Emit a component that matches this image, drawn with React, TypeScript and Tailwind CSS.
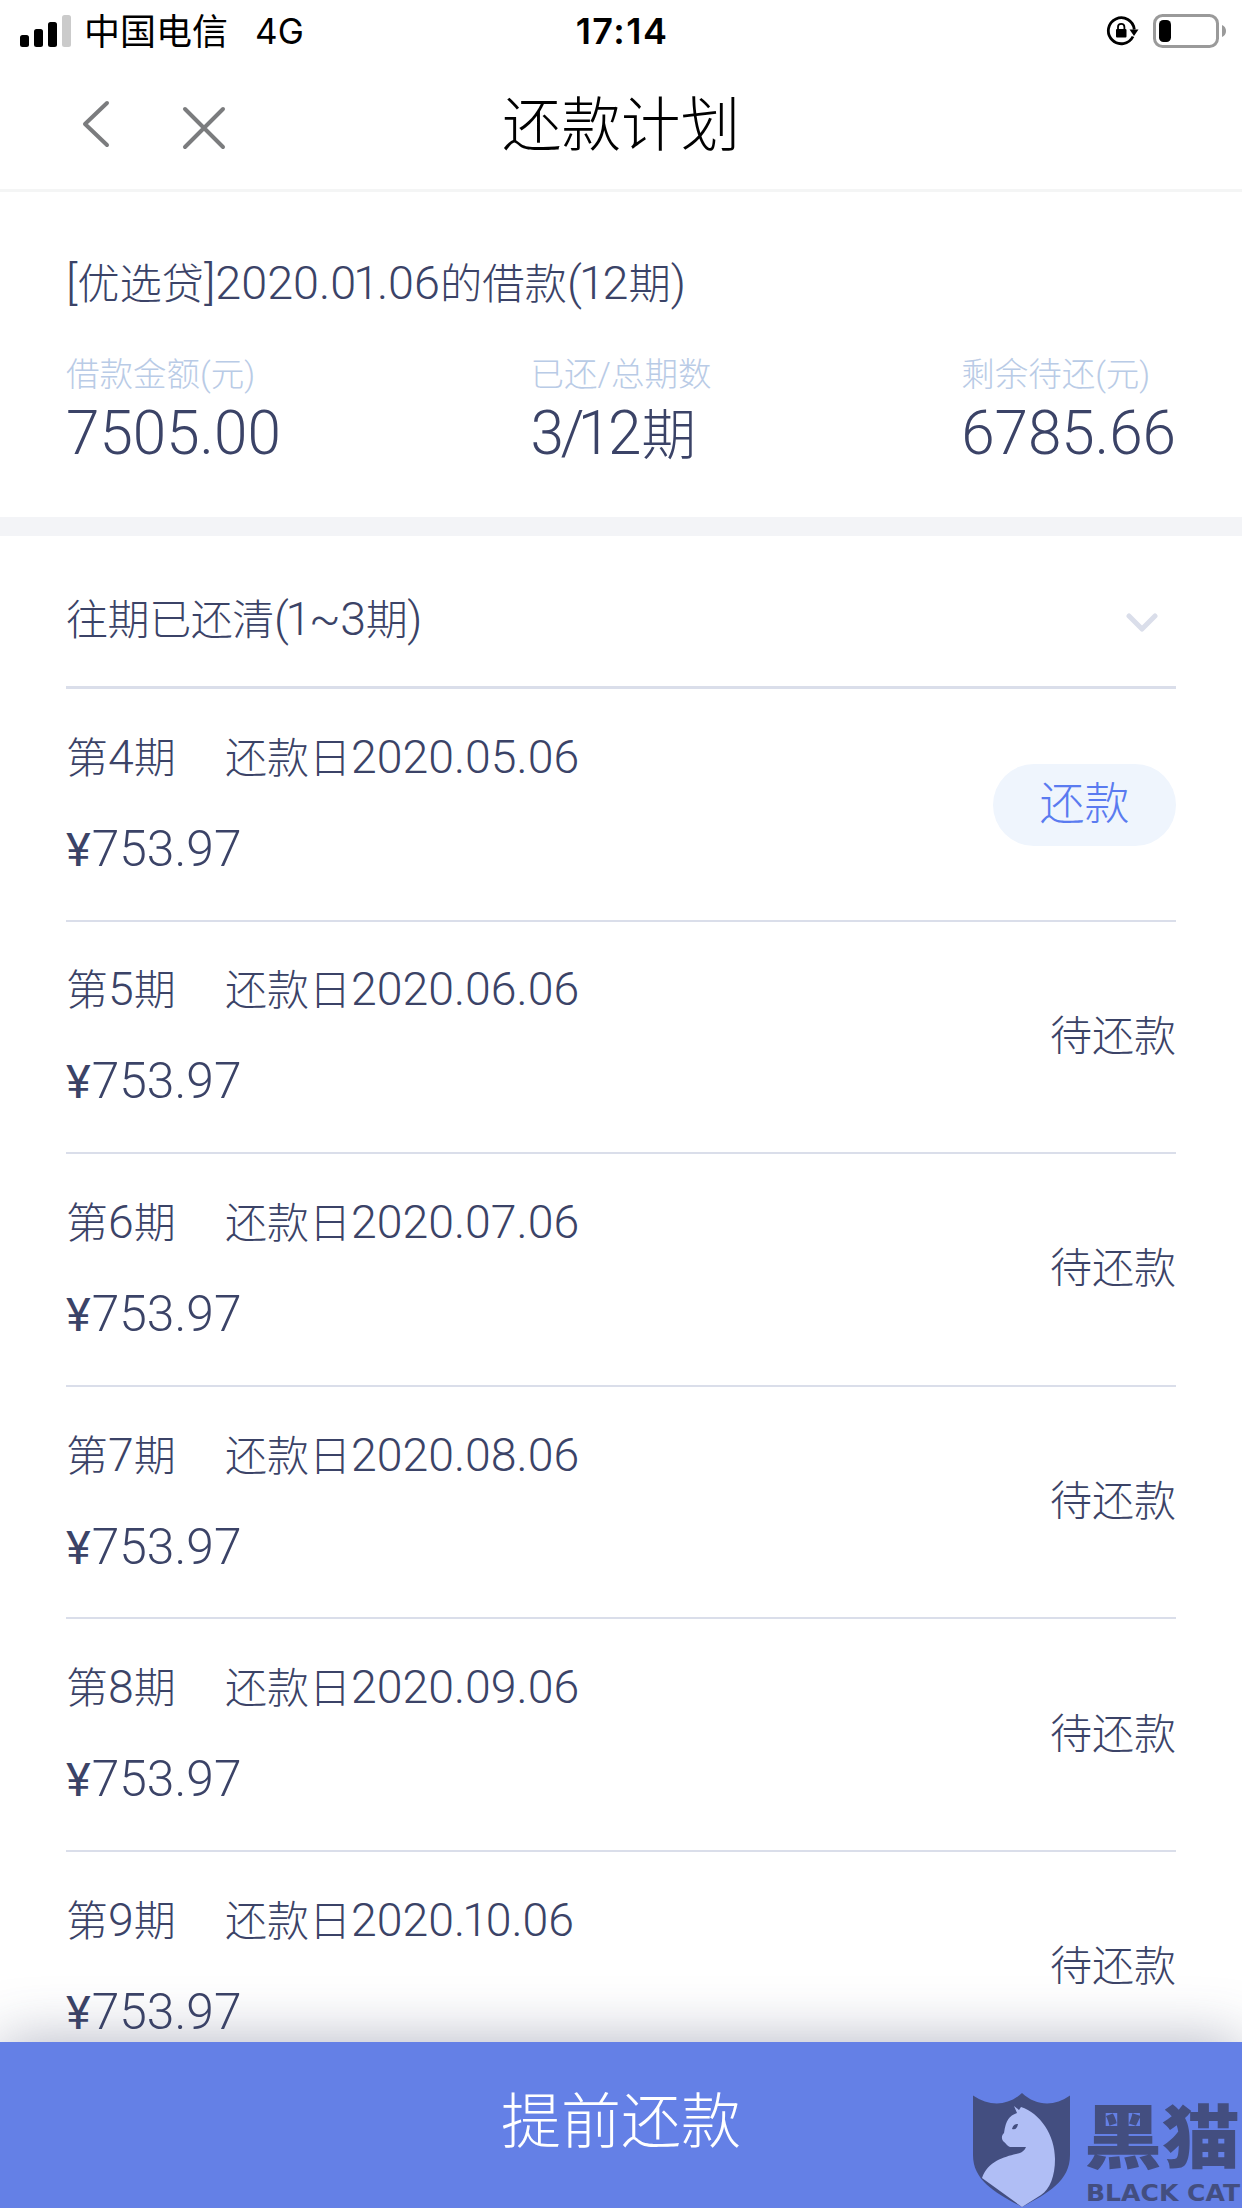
import React from "react";

const plans = [
  { no: 4, date: "2020.05.06", amount: "753.97", payable: true },
  { no: 5, date: "2020.06.06", amount: "753.97", payable: false },
  { no: 6, date: "2020.07.06", amount: "753.97", payable: false },
  { no: 7, date: "2020.08.06", amount: "753.97", payable: false },
  { no: 8, date: "2020.09.06", amount: "753.97", payable: false },
  { no: 9, date: "2020.10.06", amount: "753.97", payable: false },
];

// latin parts are set a little larger than the chinese ones,
// "1" and "/" are pulled in so they don't look too loose
const Mixed = ({ text }: { text: string }) => (
  <>
    {text.split(/([0-9.~[\]()/]+)/).map((part, i) =>
      i % 2 ? (
        <span key={i} className="text-[1.105em]">
          {part.split(/([1/])/).map((c, j) =>
            j % 2 ? <span key={j} className="-ml-[0.06em] tracking-[-0.05em]">{c}</span> : c
          )}
        </span>
      ) : (
        part
      )
    )}
  </>
);

const StatusBar = () => (
  <div className="relative flex h-[62px] items-center justify-between">
    <div className="flex items-center">
      <svg className="ml-5 h-[32px] w-[51px]" viewBox="0 0 51 32">
        <rect x="0" y="20" width="9" height="12" rx="2.5" />
        <rect x="14" y="14" width="9" height="18" rx="2.5" />
        <rect x="28" y="7" width="9" height="25" rx="2.5" />
        <rect x="42" y="0" width="9" height="32" rx="2.5" fill="#cbcbcb" />
      </svg>
      <span className="-mt-1 ml-[13px] font-['Noto_Sans_CJK_SC',sans-serif] text-[36px] leading-[62px]">中国电信</span>
      <span className="ml-[27px] font-[Inter,sans-serif] text-[35px] leading-[62px]">4G</span>
    </div>
    <span className="absolute inset-x-0 pl-[2px] text-center font-[Inter,sans-serif] text-[36px] font-semibold leading-[62px] tracking-[0.04em]">
      17:14
    </span>
    <div className="flex items-center">
      <svg className="h-[30px] w-[33px]" viewBox="0 0 33 30" fill="none">
        <path d="M27 20.500A13 13 0 1 1 28.300 13.500" stroke="#000" strokeWidth="2.8" />
        <path d="M23.500 13.500h9l-4.500 6.500z" fill="#000" />
        <rect x="10" y="13" width="10.500" height="8.500" rx="1" fill="#000" />
        <path d="M12 14v-3a3.200 3.200 0 0 1 6.400 0v3" stroke="#000" strokeWidth="1.8" />
      </svg>
      <svg className="-mt-px ml-[14px] mr-[15px] h-[34px] w-[74px]" viewBox="0 0 74 34" fill="none">
        <rect x="1.5" y="1.5" width="63" height="31" rx="8" stroke="#9a9a9a" strokeWidth="3" />
        <rect x="6" y="6" width="12" height="22" rx="4.5" fill="#000" />
        <path d="M69 11c2.500 1 4 3.300 4 6s-1.500 5-4 6z" fill="#9a9a9a" />
      </svg>
    </div>
  </div>
);

const Header = () => (
  <header className="relative flex h-[130px] items-center border-b-[3px] border-[#f4f5f5]">
    <svg className="-mt-[3px] ml-[82px] h-[48px] w-[28px]" viewBox="0 0 28 48" fill="none" stroke="#7b7c7e" strokeWidth="4" strokeLinecap="round" strokeLinejoin="round">
      <path d="M25 3L3 24l22 21" />
    </svg>
    <svg className="ml-[72px] mt-[5px] h-[44px] w-[44px]" viewBox="0 0 44 44" fill="none" stroke="#7b7c7e" strokeWidth="4" strokeLinecap="round">
      <path d="M3 3l38 38M41 3L3 41" />
    </svg>
    <h1 className="absolute inset-x-0 top-0 text-center text-[59.5px] leading-[129px] text-black">还款计划</h1>
  </header>
);

const Stat = ({ label, value }: { label: string; value: string }) => (
  <div>
    <p className="text-[33.5px] leading-[50px] text-[#b9cbe6]">
      {label}
    </p>
    <p className="-mt-px text-[54.5px] leading-[70px]">
      <Mixed text={value} />
    </p>
  </div>
);

const BlackCat = () => (
  <svg className="absolute bottom-0 right-0 h-[118px] w-[270px] overflow-visible" viewBox="0 0 270 118">
    <path d="M1 5.500C18 17 36 16 50 3c14 13 32 14 48 2.500V65c0 26-22 38-48 52C24 103 1 91 1 65z" fill="#434e80" />
    <path d="M42 16l5 4 2-3c19 6 34 28 34 52 0 17-5 30-14 36l-19 12-40-29c6-17 22-21 34-24 6-1 9-4 10-7H38c-3-1-4-4-7-6-2-3-1-6 1-8 2-13 5-17 13-20z" fill="#b0bef5" />
    <path d="M40 39c1-4 3-5 6-5-1 4-2 6-6 5z" fill="#434e80" />
    <text x="112" y="73" textLength="156" lengthAdjust="spacingAndGlyphs" fontSize="69" fill="#434e80" className="font-['Noto_Sans_CJK_SC',sans-serif] font-black">黑猫</text>
    <text x="114" y="111" textLength="154" lengthAdjust="spacingAndGlyphs" fontSize="22.500" fill="#434e80" className="font-['DejaVu_Sans',sans-serif] font-bold">BLACK CAT</text>
  </svg>
);

const App = () => {
  return (
    <div className="relative flex h-[2208px] w-[1242px] flex-col overflow-hidden bg-white font-[Roboto,'Noto_Sans_CJK_SC',sans-serif] font-light text-[#3b4367]">
      <div className="font-normal text-black">
        <StatusBar />
      </div>
      <Header />

      <section className="h-[325px] px-[66px] pt-[61px]">
        <h2 className="text-[42.3px] leading-[60px]">
          <Mixed text="[优选贷]2020.01.06的借款(12期)" />
        </h2>
        <div className="mt-[35px] flex justify-between">
          <Stat label="借款金额(元)" value="7505.00" />
          <Stat label="已还/总期数" value="3/12期" />
          <Stat label="剩余待还(元)" value="6785.66" />
        </div>
      </section>

      <div className="h-[19px] shrink-0 bg-[#f3f4f7]" />

      <section className="px-[66px]">
        <div className="flex h-[153px] items-center justify-between border-b-[3px] border-[#dadeea]">
          <p className="pt-[17px] text-[42px] leading-[60px] tracking-[-0.01em]">
            <Mixed text="往期已还清(1~3期)" />
          </p>
          <svg className="mr-[18px] mt-[23px] h-[20px] w-[32px]" viewBox="0 0 32 20" fill="none" stroke="#dadeea" strokeWidth="5" strokeLinecap="round" strokeLinejoin="round">
            <path d="M3 3l13 13L29 3" />
          </svg>
        </div>

        {plans.map((plan) => (
          <div key={plan.no} className="flex h-[232.6px] items-center justify-between border-b-2 border-[#dadeea]">
            <div className="-mt-px">
              <p className="flex text-[42px] leading-[60px]">
                <span className="w-[159px]"><Mixed text={`第${plan.no}期`} /></span>
                <span><Mixed text={`还款日${plan.date}`} /></span>
              </p>
              <p className="mt-[30px] text-[45px] leading-[60px]">
                <span className="mr-px text-[47px] font-normal">¥</span>
                <Mixed text={plan.amount} />
              </p>
            </div>
            {plan.payable ? (
              <button type="button" className="mt-px h-[82px] w-[183px] rounded-full bg-[#eff5fd] text-[45px] leading-[78px] text-[#5a7bf0]">
                还款
              </button>
            ) : (
              <span className="text-[42px] leading-[60px]">待还款</span>
            )}
          </div>
        ))}
      </section>

      <footer className="absolute inset-x-0 bottom-0 h-[166px] bg-[#6480e6] text-center text-[60px] leading-[162px] text-white shadow-[0_0_60px_rgba(60,67,103,0.4)]">
        提前还款
        <BlackCat />
      </footer>
    </div>
  );
};

export default App;
